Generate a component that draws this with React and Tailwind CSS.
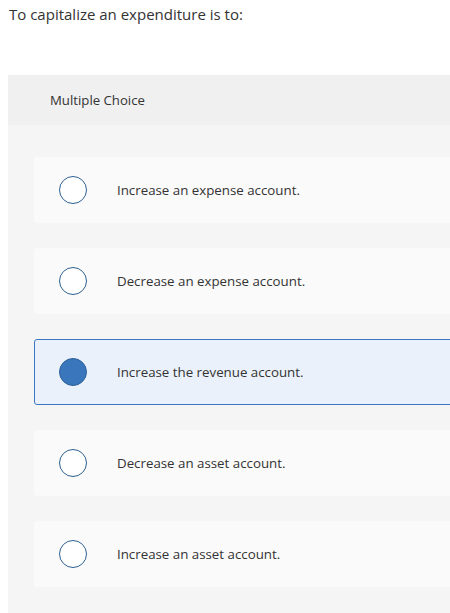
export default function App() {
  const options = [
    { text: "Increase an expense account.", selected: false },
    { text: "Decrease an expense account.", selected: false },
    { text: "Increase the revenue account.", selected: true },
    { text: "Decrease an asset account.", selected: false },
    { text: "Increase an asset account.", selected: false },
  ];
  return (
    <div
      className="w-[450px] h-[613px] overflow-hidden bg-white text-[#333]"
      style={{ fontFamily: '"Open Sans", "Liberation Sans", sans-serif' }}
    >
      <p className="pl-[9px] pt-[4px] text-[15px] leading-[20px] text-[#333]">
        To capitalize an expenditure is to:
      </p>
      <div className="ml-[8px] mt-[51px] w-[600px] h-[600px] bg-[#f5f5f5]">
        <div className="h-[50px] bg-[#f0f0f0] flex items-center pl-[42px] pt-[2px] text-[13.2px] text-[#333]">
          Multiple Choice
        </div>
        <div className="pl-[26px] pt-[32px] flex flex-col gap-[25px]">
          {options.map((o, i) => (
            <div
              key={i}
              className={
                o.selected
                  ? "h-[66px] rounded-[3px] border border-[#3b78c0] bg-[#eaf1fa] flex items-center"
                  : "h-[66px] rounded-[3px] border border-[#fafafa] bg-[#fafafa] flex items-center"
              }
            >
              <div className="ml-[24px] w-[28px] h-[28px] shrink-0">
                {o.selected ? (
                  <div className="w-[28px] h-[28px] rounded-full bg-[#3a76bb] border border-[#2f6199]" />
                ) : (
                  <div className="w-[28px] h-[28px] rounded-full bg-white border-[1.5px] border-[#2e5f91]" />
                )}
              </div>
              <span className="ml-[30px] pt-[2px] text-[13.3px] text-[#333]">{o.text}</span>
            </div>
          ))}
        </div>
      </div>
    </div>
  );
}
